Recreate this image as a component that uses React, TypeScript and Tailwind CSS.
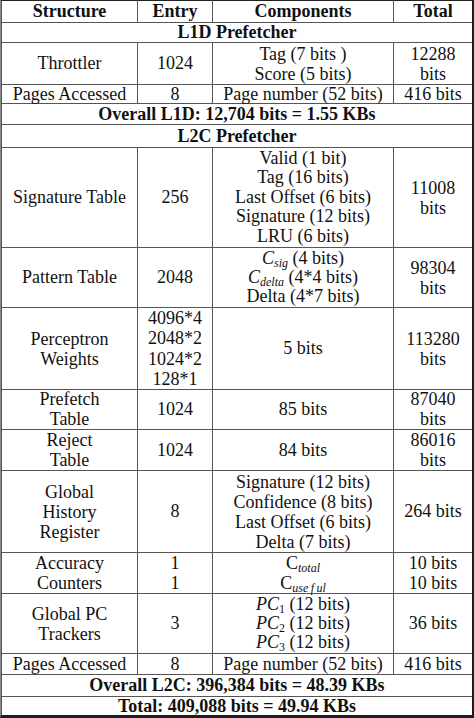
import React from "react";

const td = "border border-[#555] p-0 text-center align-middle";

function Cell({ children, className = "", colSpan }: { children: React.ReactNode; className?: string; colSpan?: number }) {
  return (
    <td colSpan={colSpan} className={`${td} ${className}`}>
      {children}
    </td>
  );
}

function Lines({ items, className = "leading-[20px]" }: { items: React.ReactNode[]; className?: string }) {
  return (
    <div className={`flex flex-col items-center ${className}`}>
      {items.map((it, i) => (
        <div key={i}>{it}</div>
      ))}
    </div>
  );
}

const sub = "text-[12px] italic";

export default function App() {
  return (
    <div className="w-[474px] h-[718px] bg-white border-l border-l-[#8a8a8a] border-r-2 border-r-[#1e1e1e] border-b-[3px] border-b-[#1e1e1e] overflow-hidden font-['Liberation_Serif','Times_New_Roman',serif]">
      <table className="w-[471px] table-fixed border-collapse text-[#111] text-[18px] leading-[17px]">
        <colgroup>
          <col className="w-[136px]" />
          <col className="w-[75px]" />
          <col className="w-[181px]" />
          <col className="w-[79px]" />
        </colgroup>
        <tbody>
          <tr className="h-[22px] font-bold">
            <Cell className="border-t-[#222]">Structure</Cell>
            <Cell className="border-t-[#222]">Entry</Cell>
            <Cell className="border-t-[#222]">Components</Cell>
            <Cell className="border-t-[#222]">Total</Cell>
          </tr>
          <tr className="h-[20px] font-bold">
            <Cell colSpan={4}>L1D Prefetcher</Cell>
          </tr>
          <tr className="h-[42px]">
            <Cell>Throttler</Cell>
            <Cell>1024</Cell>
            <Cell>
              <Lines items={["Tag (7 bits )", "Score (5 bits)"]} />
            </Cell>
            <Cell>
              <Lines items={["12288", "bits"]} />
            </Cell>
          </tr>
          <tr className="h-[19px]">
            <Cell className="whitespace-nowrap">Pages Accessed</Cell>
            <Cell>8</Cell>
            <Cell className="whitespace-nowrap">Page number (52 bits)</Cell>
            <Cell className="whitespace-nowrap">416 bits</Cell>
          </tr>
          <tr className="h-[21px] font-bold">
            <Cell colSpan={4}>Overall L1D: 12,704 bits = 1.55 KBs</Cell>
          </tr>
          <tr className="h-[23px] font-bold">
            <Cell colSpan={4}>L2C Prefetcher</Cell>
          </tr>
          <tr className="h-[100px]">
            <Cell>Signature Table</Cell>
            <Cell>256</Cell>
            <Cell>
              <Lines
                className="leading-[19.6px]"
                items={["Valid (1 bit)", "Tag (16 bits)", "Last Offset (6 bits)", "Signature (12 bits)", "LRU (6 bits)"]}
              />
            </Cell>
            <Cell>
              <Lines items={["11008", "bits"]} />
            </Cell>
          </tr>
          <tr className="h-[60px]">
            <Cell>Pattern Table</Cell>
            <Cell>2048</Cell>
            <Cell>
              <Lines
                className="leading-[19px]"
                items={[
                  <span>
                    <i>C</i>
                    <sub className={sub}>sig</sub> (4 bits)
                  </span>,
                  <span>
                    <i>C</i>
                    <sub className={sub}>delta</sub> (4*4 bits)
                  </span>,
                  "Delta (4*7 bits)",
                ]}
              />
            </Cell>
            <Cell>
              <Lines items={["98304", "bits"]} />
            </Cell>
          </tr>
          <tr className="h-[82px]">
            <Cell>
              <Lines items={["Perceptron", "Weights"]} />
            </Cell>
            <Cell>
              <Lines className="leading-[20.2px]" items={["4096*4", "2048*2", "1024*2", "128*1"]} />
            </Cell>
            <Cell>5 bits</Cell>
            <Cell>
              <Lines items={["113280", "bits"]} />
            </Cell>
          </tr>
          <tr className="h-[40px]">
            <Cell>
              <Lines className="leading-[19.5px]" items={["Prefetch", "Table"]} />
            </Cell>
            <Cell>1024</Cell>
            <Cell>85 bits</Cell>
            <Cell>
              <Lines className="leading-[19.5px]" items={["87040", "bits"]} />
            </Cell>
          </tr>
          <tr className="h-[41px]">
            <Cell>
              <Lines items={["Reject", "Table"]} />
            </Cell>
            <Cell>1024</Cell>
            <Cell>84 bits</Cell>
            <Cell>
              <Lines items={["86016", "bits"]} />
            </Cell>
          </tr>
          <tr className="h-[82px]">
            <Cell>
              <Lines items={["Global", "History", "Register"]} />
            </Cell>
            <Cell>8</Cell>
            <Cell>
              <Lines
                items={["Signature (12 bits)", "Confidence (8 bits)", "Last Offset (6 bits)", "Delta (7 bits)"]}
              />
            </Cell>
            <Cell className="whitespace-nowrap">264 bits</Cell>
          </tr>
          <tr className="h-[41px]">
            <Cell>
              <Lines items={["Accuracy", "Counters"]} />
            </Cell>
            <Cell>
              <Lines items={["1", "1"]} />
            </Cell>
            <Cell>
              <Lines
                items={[
                  <span>
                    C<sub className={sub}>total</sub>
                  </span>,
                  <span>
                    C<sub className={sub}>use&#8201;f&#8201;ul</sub>
                  </span>,
                ]}
              />
            </Cell>
            <Cell>
              <Lines items={["10 bits", "10 bits"]} />
            </Cell>
          </tr>
          <tr className="h-[60px]">
            <Cell>
              <Lines items={["Global PC", "Trackers"]} />
            </Cell>
            <Cell>3</Cell>
            <Cell>
              <Lines
                className="leading-[19px]"
                items={[1, 2, 3].map((n) => (
                  <span>
                    <i>PC</i>
                    <sub className="text-[12px]">{n}</sub> (12 bits)
                  </span>
                ))}
              />
            </Cell>
            <Cell className="whitespace-nowrap">36 bits</Cell>
          </tr>
          <tr className="h-[21px]">
            <Cell className="whitespace-nowrap">Pages Accessed</Cell>
            <Cell>8</Cell>
            <Cell className="whitespace-nowrap">Page number (52 bits)</Cell>
            <Cell className="whitespace-nowrap">416 bits</Cell>
          </tr>
          <tr className="h-[22px] font-bold">
            <Cell colSpan={4}>Overall L2C: 396,384 bits = 48.39 KBs</Cell>
          </tr>
          <tr className="h-[19px] font-bold">
            <Cell colSpan={4} className="border-b-0">
              Total: 409,088 bits = 49.94 KBs
            </Cell>
          </tr>
        </tbody>
      </table>
    </div>
  );
}
